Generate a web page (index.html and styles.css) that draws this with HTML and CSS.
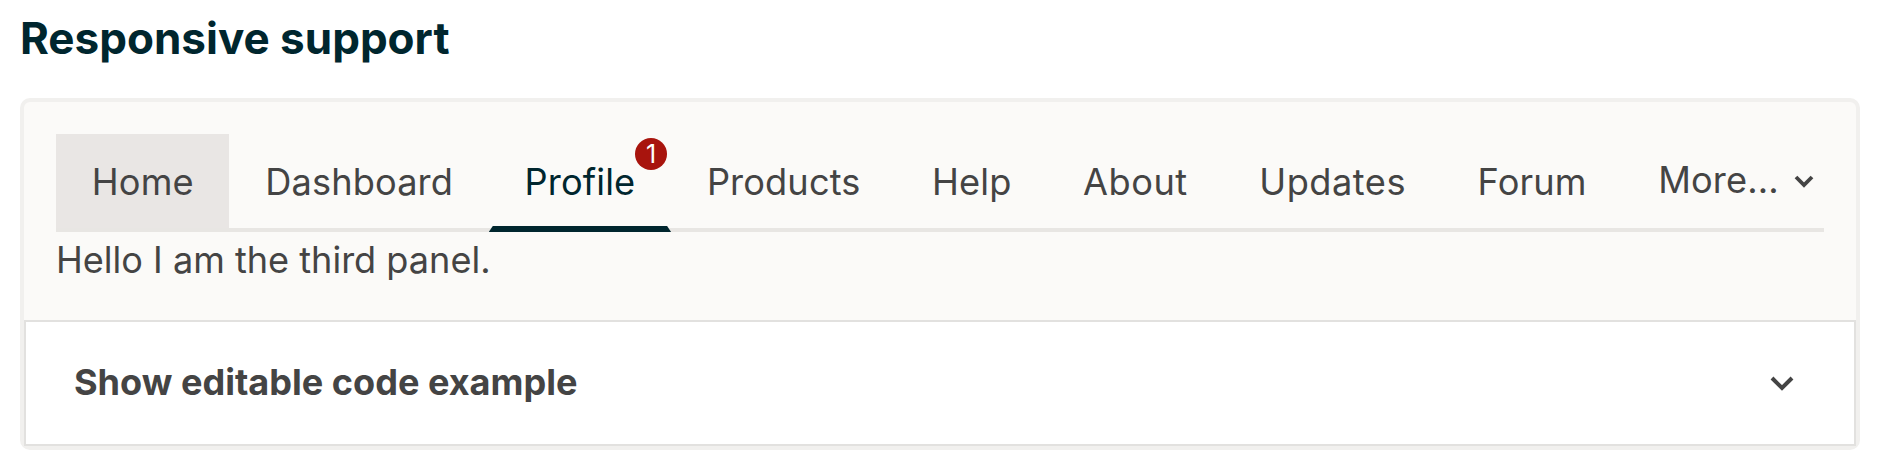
FILE: index.html
```html
<!DOCTYPE html>
<html lang="en">
<head>
    <meta charset="UTF-8">
    <title>Responsive support</title>
    <link rel="stylesheet" href="styles.css">
</head>
<body>
    <h2 class="title">Responsive support</h2>

    <div class="example">
        <div class="preview">
            <div class="tabs">
                <a class="tab tab-hover">Home</a>
                <a class="tab">Dashboard</a>
                <a class="tab tab-active">Profile<span class="badge">1</span></a>
                <a class="tab">Products</a>
                <a class="tab">Help</a>
                <a class="tab tab-wide">About</a>
                <a class="tab tab-wide">Updates</a>
                <a class="tab">Forum</a>
                <a class="tab tab-more">
                    <span class="more-label">More...</span>
                    <svg class="more-icon" viewBox="0 0 20 13" width="20" height="13"><path d="M2 2l8 8 8-8" fill="none" stroke="#444" stroke-width="3.8"/></svg>
                </a>
            </div>
            <div class="panel">Hello I am the third panel.</div>
        </div>

        <div class="code-toggle">
            <span>Show editable code example</span>
            <svg class="toggle-icon" viewBox="0 0 24 15" width="24" height="15"><path d="M2 2l10 10L22 2" fill="none" stroke="#444" stroke-width="4"/></svg>
        </div>
    </div>
</body>
</html>
```

FILE: styles.css
```css
body {
    margin: 0;
    padding: 0 20px;
    background-color: #fff;
    font-family: Inter, 'Noto Sans', sans-serif;
    color: #444;
}
.title {
    margin: 0;
    height: 98px;
    padding-top: 13px;
    box-sizing: border-box;
    font-size: 44px;
    line-height: 50px;
    font-weight: 700;
    color: #00262e;
}
.example {
    border: 4px solid #f1f0ee;
    border-radius: 10px;
    background-color: #fbfaf8;
}
.preview {
    padding: 32px;
}
.tabs {
    display: flex;
    border-bottom: 4px solid #e8e6e3;
    font-size: 36.2px;
    letter-spacing: 0.12px;
}
.tab {
    position: relative;
    padding: 0 35.8px;
    height: 94px;
    line-height: 96px;
    white-space: nowrap;
}
.tab-hover {
    background-color: #e9e6e4;
}
.tab-wide {
    letter-spacing: 0.5px;
}
.tab-active {
    color: #00262e;
}
.tab-active::after {
    content: "";
    position: absolute;
    left: 0;
    right: 0;
    bottom: -4px;
    height: 6px;
    background-color: #00262e;
    clip-path: polygon(4px 0, calc(100% - 4px) 0, 100% 100%, 0 100%);
}
.badge {
    position: absolute;
    top: 4px;
    right: 4px;
    width: 32px;
    height: 32px;
    border-radius: 50%;
    background-color: #a8140d;
    color: #fff;
    font-size: 25px;
    line-height: 32px;
    text-align: center;
}
.tab-more {
    display: flex;
    align-items: center;
    padding-right: 10px;
}
.more-label {
    position: relative;
    top: -1px;
}
.more-icon {
    margin-left: 15px;
}
.panel {
    font-size: 36.1px;
    line-height: 56px;
}
.code-toggle {
    display: flex;
    justify-content: space-between;
    align-items: center;
    height: 120px;
    padding: 0 60px 2px 48px;
    border: 2px solid #e2e1df;
    background-color: #fff;
    font-size: 36.1px;
    font-weight: 700;
}
.toggle-icon {
    margin-top: 2px;
}
```
